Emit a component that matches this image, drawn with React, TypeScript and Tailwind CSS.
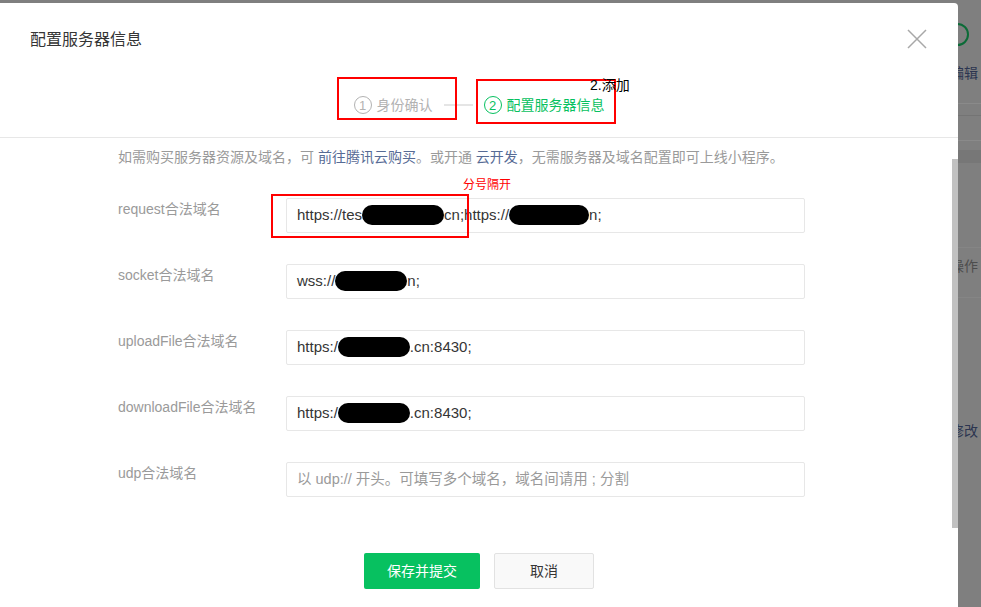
const font = { fontFamily: '"Liberation Sans", "Noto Sans CJK SC", sans-serif' };

function Blob({ w }: { w: number }) {
  return (
    <span
      className="inline-block h-[20px] bg-black rounded-[10px] align-middle -mt-[2px]"
      style={{ width: w }}
    />
  );
}

function Row({ label, children }: { label: string; children: React.ReactNode }) {
  return (
    <div className="flex items-start">
      <div className="w-[168px] pt-[1px] text-[14px] leading-[20px] text-[#9a9a9a]">{label}</div>
      <div className="w-[519px] h-[35px] border border-[#e7e7e7] rounded-[2px] pl-[10px] flex items-center text-[15px] text-[#353535] whitespace-nowrap overflow-hidden">
        {children}
      </div>
    </div>
  );
}

function Step({ n, label, active }: { n: number; label: string; active?: boolean }) {
  const color = active ? 'text-[#07c160]' : 'text-[#b2b2b2]';
  return (
    <div className={`flex items-center gap-[5px] ${color}`}>
      <span className="w-[18px] h-[18px] rounded-full border border-current flex items-center justify-center text-[13px] leading-none">
        {n}
      </span>
      <span className="text-[14px] leading-[20px]">{label}</span>
    </div>
  );
}

export default function App() {
  return (
    <div className="relative w-full h-[607px] bg-[#7f7f7f] overflow-hidden flex pt-[3px]" style={font}>
      {/* dialog */}
      <div className="w-[958px] h-full bg-white rounded-tr-[4px] flex flex-col shrink-0 relative z-10">
        {/* header */}
        <div className="relative h-[135px] border-b border-[#e7e7e7] flex flex-col shrink-0">
          <div className="pl-[30px] pt-[25px] text-[16px] leading-[24px] text-[#353535]">配置服务器信息</div>
          <svg
            className="absolute left-[907px] top-[26px] w-[20px] h-[20px]"
            viewBox="0 0 20 20"
            fill="none"
            stroke="#a8a8a8"
            strokeWidth={1.5}
          >
            <path d="M1 1L19 19M19 1L1 19" />
          </svg>
          <div className="mt-[43px] flex items-center justify-center">
            <Step n={1} label="身份确认" />
            <span className="mx-[11px] w-[29px] h-[2px] bg-[#e5e5e5]" />
            <Step n={2} label="配置服务器信息" active />
          </div>
          {/* annotations */}
          <div className="absolute left-[337px] top-[74px] w-[120px] h-[43px] border-2 border-[#ff0000]" />
          <div className="absolute left-[476px] top-[76px] w-[140px] h-[45px] border-2 border-[#ff0000]" />
          <div className="absolute left-[590px] top-[73px] text-[14px] leading-[18px] text-black">2.添加</div>
        </div>

        {/* body */}
        <div className="relative flex-1 pl-[118px] pt-[9px]">
          <p className="text-[14px] leading-[20px] text-[#9a9a9a] whitespace-nowrap">
            如需购买服务器资源及域名，可 <span className="text-[#576b95]">前往腾讯云购买</span>。或开通{' '}
            <span className="text-[#576b95]">云开发</span>，无需服务器及域名配置即可上线小程序。
          </p>

          <div className="mt-[31px] flex flex-col gap-[31px]">
            <Row label="request合法域名">
              https://tes<Blob w={82} />cn;https://<Blob w={80} />n;
            </Row>
            <Row label="socket合法域名">
              wss://<Blob w={72} />n;
            </Row>
            <Row label="uploadFile合法域名">
              https:/<Blob w={72} />.cn:8430;
            </Row>
            <Row label="downloadFile合法域名">
              https:/<Blob w={72} />.cn:8430;
            </Row>
            <Row label="udp合法域名">
              <span className="text-[14.5px] text-[#9a9a9a]">以 udp:// 开头。可填写多个域名，域名间请用 ; 分割</span>
            </Row>
          </div>

          <div className="mt-[56px] flex justify-center gap-[14px] -ml-[118px]">
            <button className="w-[116px] h-[36px] rounded-[2px] bg-[#07c160] text-white text-[14px]">保存并提交</button>
            <button className="w-[100px] h-[36px] rounded-[2px] bg-[#f9f9f9] border border-[#e2e2e2] text-[#353535] text-[14px]">取消</button>
          </div>

          {/* annotations */}
          <div className="absolute left-[463px] top-[39px] text-[12px] leading-[16px] text-[#ff0000]">分号隔开</div>
          <div className="absolute left-[271px] top-[56px] w-[198px] h-[44px] border-2 border-[#ff0000]" />

          {/* scrollbar */}
          <div className="absolute right-0 top-[21px] w-[6px] h-[369px] bg-[#c1c1c1]" />
        </div>
      </div>

      {/* page behind the overlay */}
      <div className="relative flex-1 h-full">
        <div className="absolute -left-[12px] top-[20px] w-[23px] h-[23px] rounded-full border-2 border-[#0b6b37]" />
        <div className="absolute -left-[8px] top-[60px] text-[14px] leading-[20px] text-[#2c3550] whitespace-nowrap">编辑</div>
        <div className="absolute left-0 right-0 top-[100px] h-px bg-[#8a8a8a]" />
        <div className="absolute left-0 right-0 top-[112px] h-px bg-[#747474]" />
        <div className="absolute left-0 right-0 top-[137px] h-px bg-[#8a8a8a]" />
        <div className="absolute left-0 right-0 top-[147px] h-[13px] bg-[#777777]" />
        <div className="absolute left-0 right-0 top-[244px] h-px bg-[#858585]" />
        <div className="absolute -left-[8px] top-[253px] text-[14px] leading-[20px] text-[#4d4d4d] whitespace-nowrap">操作</div>
        <div className="absolute left-0 right-0 top-[294px] h-px bg-[#858585]" />
        <div className="absolute -left-[8px] top-[418px] text-[14px] leading-[20px] text-[#2c3550] whitespace-nowrap">修改</div>
      </div>
    </div>
  );
}
